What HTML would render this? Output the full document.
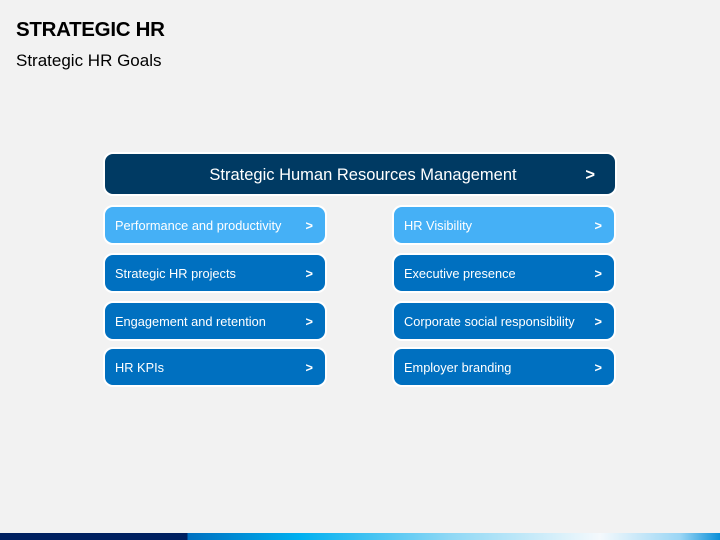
<!DOCTYPE html><html><head><style>
body{margin:0;width:720px;height:540px;background:#f2f2f2;position:relative;overflow:hidden;font-family:"Liberation Sans",sans-serif}
.t1{position:absolute;left:16px;top:18px;font-size:20.5px;font-weight:bold;color:#000;letter-spacing:-0.3px}
.t2{position:absolute;left:16px;top:51px;font-size:17px;color:#000}
.b{position:absolute;box-sizing:border-box;border:2px solid #fff;border-radius:10px;color:#fff;font-size:12.8px;display:flex;align-items:center;padding-left:10px;padding-top:1px}
.b span{position:absolute;right:12px;font-weight:bold}
.h{left:103px;top:152px;width:514px;height:44px;background:#003a63;font-size:16.5px;justify-content:center;padding-left:0;padding-top:2px}
.h .x{margin-left:6px}
.l{left:103px;width:224px;height:40px;background:#0070c0}
.r{left:392px;width:224px;height:40px;background:#0070c0}
.lt{background:#45b0f6}
.bar{position:absolute;left:0;top:533px;width:720px;height:7px;background:linear-gradient(90deg,#002060 0,#002060 187px,#0070c0 188px,#00b0f0 300px,#8fd8f5 450px,#f4f9fc 600px,#9bd6f5 680px,#0a8fd8 720px)}
</style></head><body>
<div class="t1">STRATEGIC HR</div>
<div class="t2">Strategic HR Goals</div>
<div class="b h"><div class="x">Strategic Human Resources Management</div><span style="right:20px">&gt;</span></div>
<div class="b l lt" style="top:205px">Performance and productivity<span>&gt;</span></div>
<div class="b l" style="top:253px">Strategic HR projects<span>&gt;</span></div>
<div class="b l" style="top:301px">Engagement and retention<span>&gt;</span></div>
<div class="b l" style="top:347px">HR KPIs<span>&gt;</span></div>
<div class="b r lt" style="top:205px">HR Visibility<span>&gt;</span></div>
<div class="b r" style="top:253px">Executive presence<span>&gt;</span></div>
<div class="b r" style="top:301px">Corporate social responsibility<span>&gt;</span></div>
<div class="b r" style="top:347px">Employer branding<span>&gt;</span></div>
<div class="bar"></div>
</body></html>
